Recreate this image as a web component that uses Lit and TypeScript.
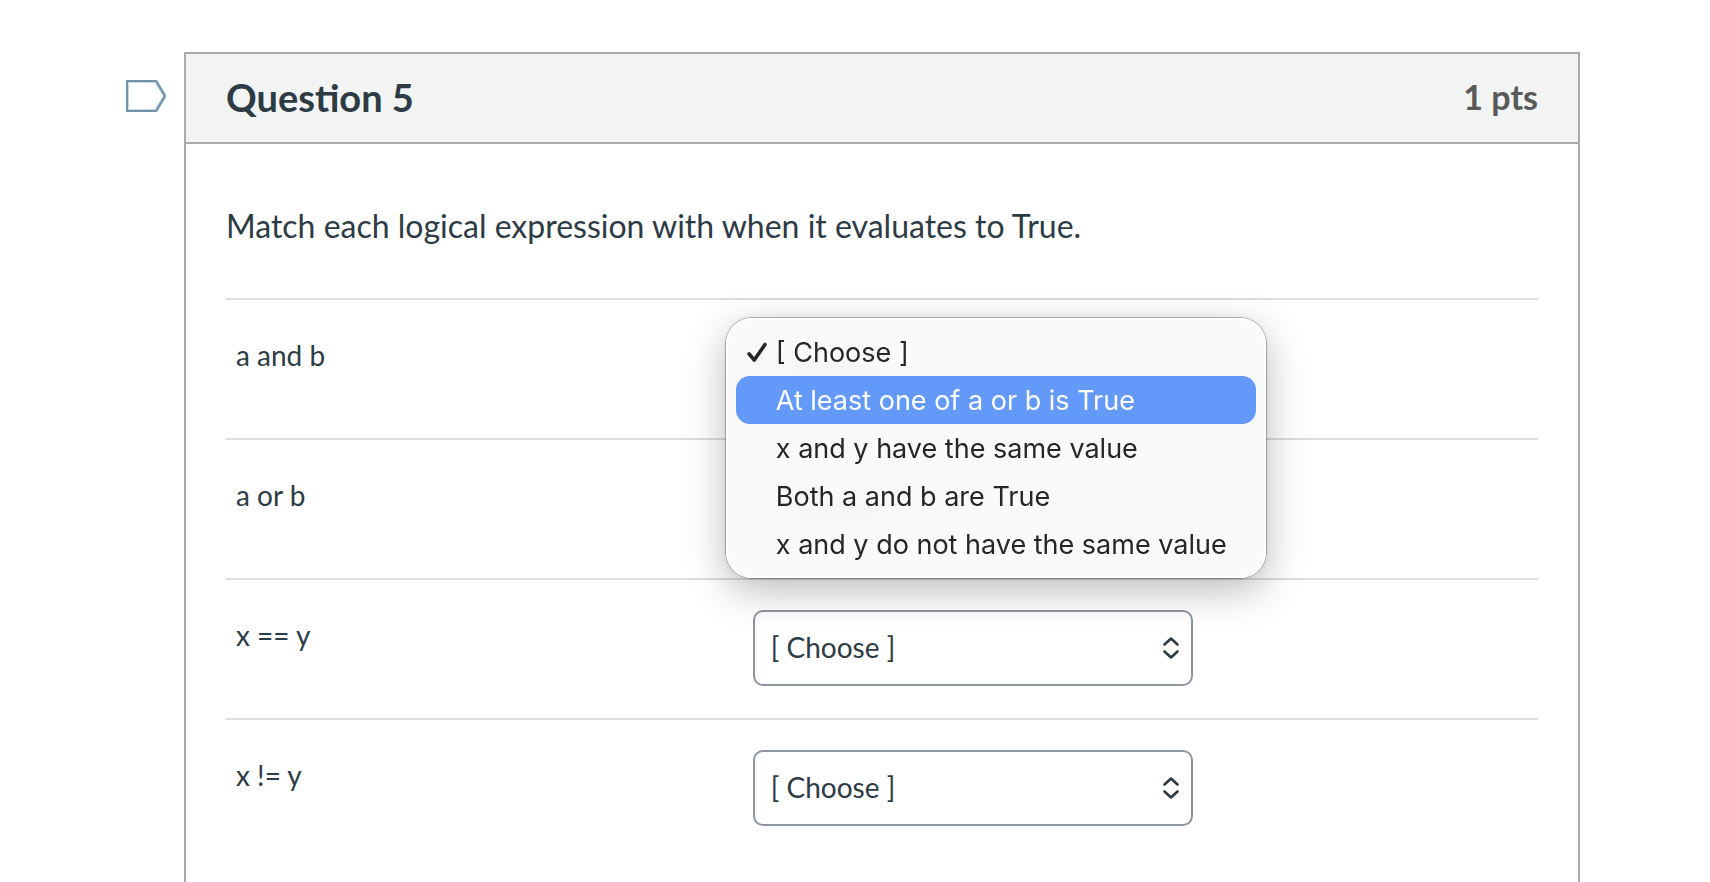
import { LitElement, html, css, svg, nothing } from "lit";
import { customElement, property, state } from "lit/decorators.js";
import { classMap } from "lit/directives/class-map.js";

const PLACEHOLDER = "[ Choose ]";

const ANSWERS = [
  "At least one of a or b is True",
  "x and y have the same value",
  "Both a and b are True",
  "x and y do not have the same value",
];

@customElement("answer-row")
class AnswerRow extends LitElement {
  @property() prompt = "";
  @property({ type: Boolean }) open = false;
  @state() private value = PLACEHOLDER;
  @state() private active = ANSWERS[0];

  static styles = css`
    :host {
      display: block;
      border-top: 2px solid #dcdddd;
    }
    .row {
      display: grid;
      grid-template-columns: 40% minmax(0, 440px);
      align-items: start;
      padding: 30px 10px 32px;
    }
    .prompt {
      padding-top: 8px;
      font-size: 28px;
      line-height: 34px;
    }
    .control {
      position: relative;
    }
    .select {
      display: block;
      box-sizing: border-box;
      width: 100%;
      height: 76px;
      margin: 0;
      padding: 0 48px 2px 16px;
      appearance: none;
      border: 2px solid #8d959f;
      border-radius: 10px;
      background: #fff;
      color: #2d3b45;
      font: inherit;
      font-size: 28px;
      outline: none;
    }
    .arrows {
      position: absolute;
      top: 26px;
      right: 13px;
      width: 18px;
      height: 24px;
      pointer-events: none;
    }
    .menu {
      position: absolute;
      z-index: 2;
      top: -12px;
      left: -27px;
      box-sizing: border-box;
      width: 540px;
      padding: 10px;
      border-radius: 26px;
      background: rgba(250, 250, 251, 0.9);
      backdrop-filter: blur(10px);
      box-shadow:
        inset 0 0 0 2px rgba(255, 255, 255, 0.8),
        0 0 0 1px rgba(0, 0, 0, 0.24),
        0 0 6px rgba(0, 0, 0, 0.1),
        0 12px 40px rgba(0, 0, 0, 0.27);
    }
    .option {
      display: flex;
      align-items: center;
      width: 100%;
      height: 48px;
      padding: 2px 0 0 10px;
      border: 0;
      border-radius: 14px;
      background: none;
      color: #262626;
      font-family: Inter, "Liberation Sans", sans-serif;
      font-size: 27px;
      line-height: 46px;
      text-align: left;
      white-space: nowrap;
    }
    .option.active {
      background: #6399f8;
      color: #fff;
    }
    .mark {
      flex: none;
      width: 22px;
      height: 24px;
      margin-right: 8px;
    }
  `;

  private pick(value: string) {
    this.value = value;
    this.open = false;
  }

  private renderMenu() {
    return html`
      <div class="menu" role="listbox" aria-label=${this.prompt}>
        ${[PLACEHOLDER, ...ANSWERS].map(
          (text) => html`
            <button
              class=${classMap({ option: true, active: text === this.active })}
              type="button"
              role="option"
              aria-selected=${text === this.value}
              @mouseenter=${() => (this.active = text)}
              @click=${() => this.pick(text)}
            >
              <svg class="mark" viewBox="0 0 22 24" aria-hidden="true">
                ${text === this.value
                  ? svg`<path d="M3 12.8 L8.3 19 L19 3.5" fill="none" stroke="#262626" stroke-width="3.6" stroke-linecap="round" stroke-linejoin="round" />`
                  : nothing}
              </svg>
              ${text}
            </button>
          `,
        )}
      </div>
    `;
  }

  render() {
    return html`
      <div class="row">
        <label class="prompt" for="answer">${this.prompt}</label>
        <div class="control">
          <select
            class="select"
            id="answer"
            .value=${this.value}
            @change=${(e: Event) => (this.value = (e.target as HTMLSelectElement).value)}
          >
            ${[PLACEHOLDER, ...ANSWERS].map((text) => html`<option>${text}</option>`)}
          </select>
          <svg class="arrows" viewBox="0 0 18 24" aria-hidden="true">
            <path
              d="M2.5 8.5 L9 2.5 L15.5 8.5 M2.5 15.5 L9 21.5 L15.5 15.5"
              fill="none"
              stroke="#2d3b45"
              stroke-width="2.6"
              stroke-linecap="round"
              stroke-linejoin="round"
            />
          </svg>
          ${this.open ? this.renderMenu() : nothing}
        </div>
      </div>
    `;
  }
}

@customElement("app-root")
class AppRoot extends LitElement {
  static styles = css`
    :host {
      display: flex;
      align-items: stretch;
      gap: 18px;
      box-sizing: border-box;
      min-height: 100vh;
      padding: 52px 130px 0 126px;
      background: #fff;
      color: #2d3b45;
      font-family: Lato, "Liberation Sans", sans-serif;
    }
    .flag {
      flex: none;
      align-self: flex-start;
      width: 40px;
      height: 32px;
      margin: 28px 0 0;
      padding: 0;
      border: 0;
      background: none;
    }
    .flag-icon {
      display: block;
      width: 40px;
      height: 32px;
    }
    .question {
      flex: 1;
      min-width: 0;
      border: 2px solid #aaa;
      border-bottom: 0;
    }
    .header {
      display: flex;
      align-items: center;
      justify-content: space-between;
      padding: 19px 40px 21px;
      border-bottom: 2px solid #aaa;
      background: #f2f4f4;
    }
    .title {
      margin: 0;
      font-size: 38px;
      line-height: 48px;
      font-weight: 700;
    }
    .points {
      color: #595959;
      font-size: 34px;
      line-height: 48px;
      font-weight: 700;
    }
    .body {
      padding: 58px 40px 0;
    }
    .text {
      margin: 0 0 48px;
      font-size: 32px;
      line-height: 48px;
    }
  `;

  render() {
    return html`
      <button class="flag" type="button" aria-label="Flag question">
        <svg class="flag-icon" viewBox="0 0 40 32" aria-hidden="true">
          <path d="M1 1 H30 L39 16 L30 31 H1 Z" fill="#fff" stroke="#c9d7e0" stroke-width="4" />
          <path d="M1 1 H30 L39 16 L30 31 H1 Z" fill="none" stroke="#6f93ab" stroke-width="2" />
        </svg>
      </button>
      <section class="question">
        <header class="header">
          <h2 class="title">Question 5</h2>
          <span class="points">1 pts</span>
        </header>
        <div class="body">
          <p class="text">Match each logical expression with when it evaluates to True.</p>
          <answer-row prompt="a and b" open></answer-row>
          <answer-row prompt="a or b"></answer-row>
          <answer-row prompt="x == y"></answer-row>
          <answer-row prompt="x != y"></answer-row>
        </div>
      </section>
    `;
  }
}
